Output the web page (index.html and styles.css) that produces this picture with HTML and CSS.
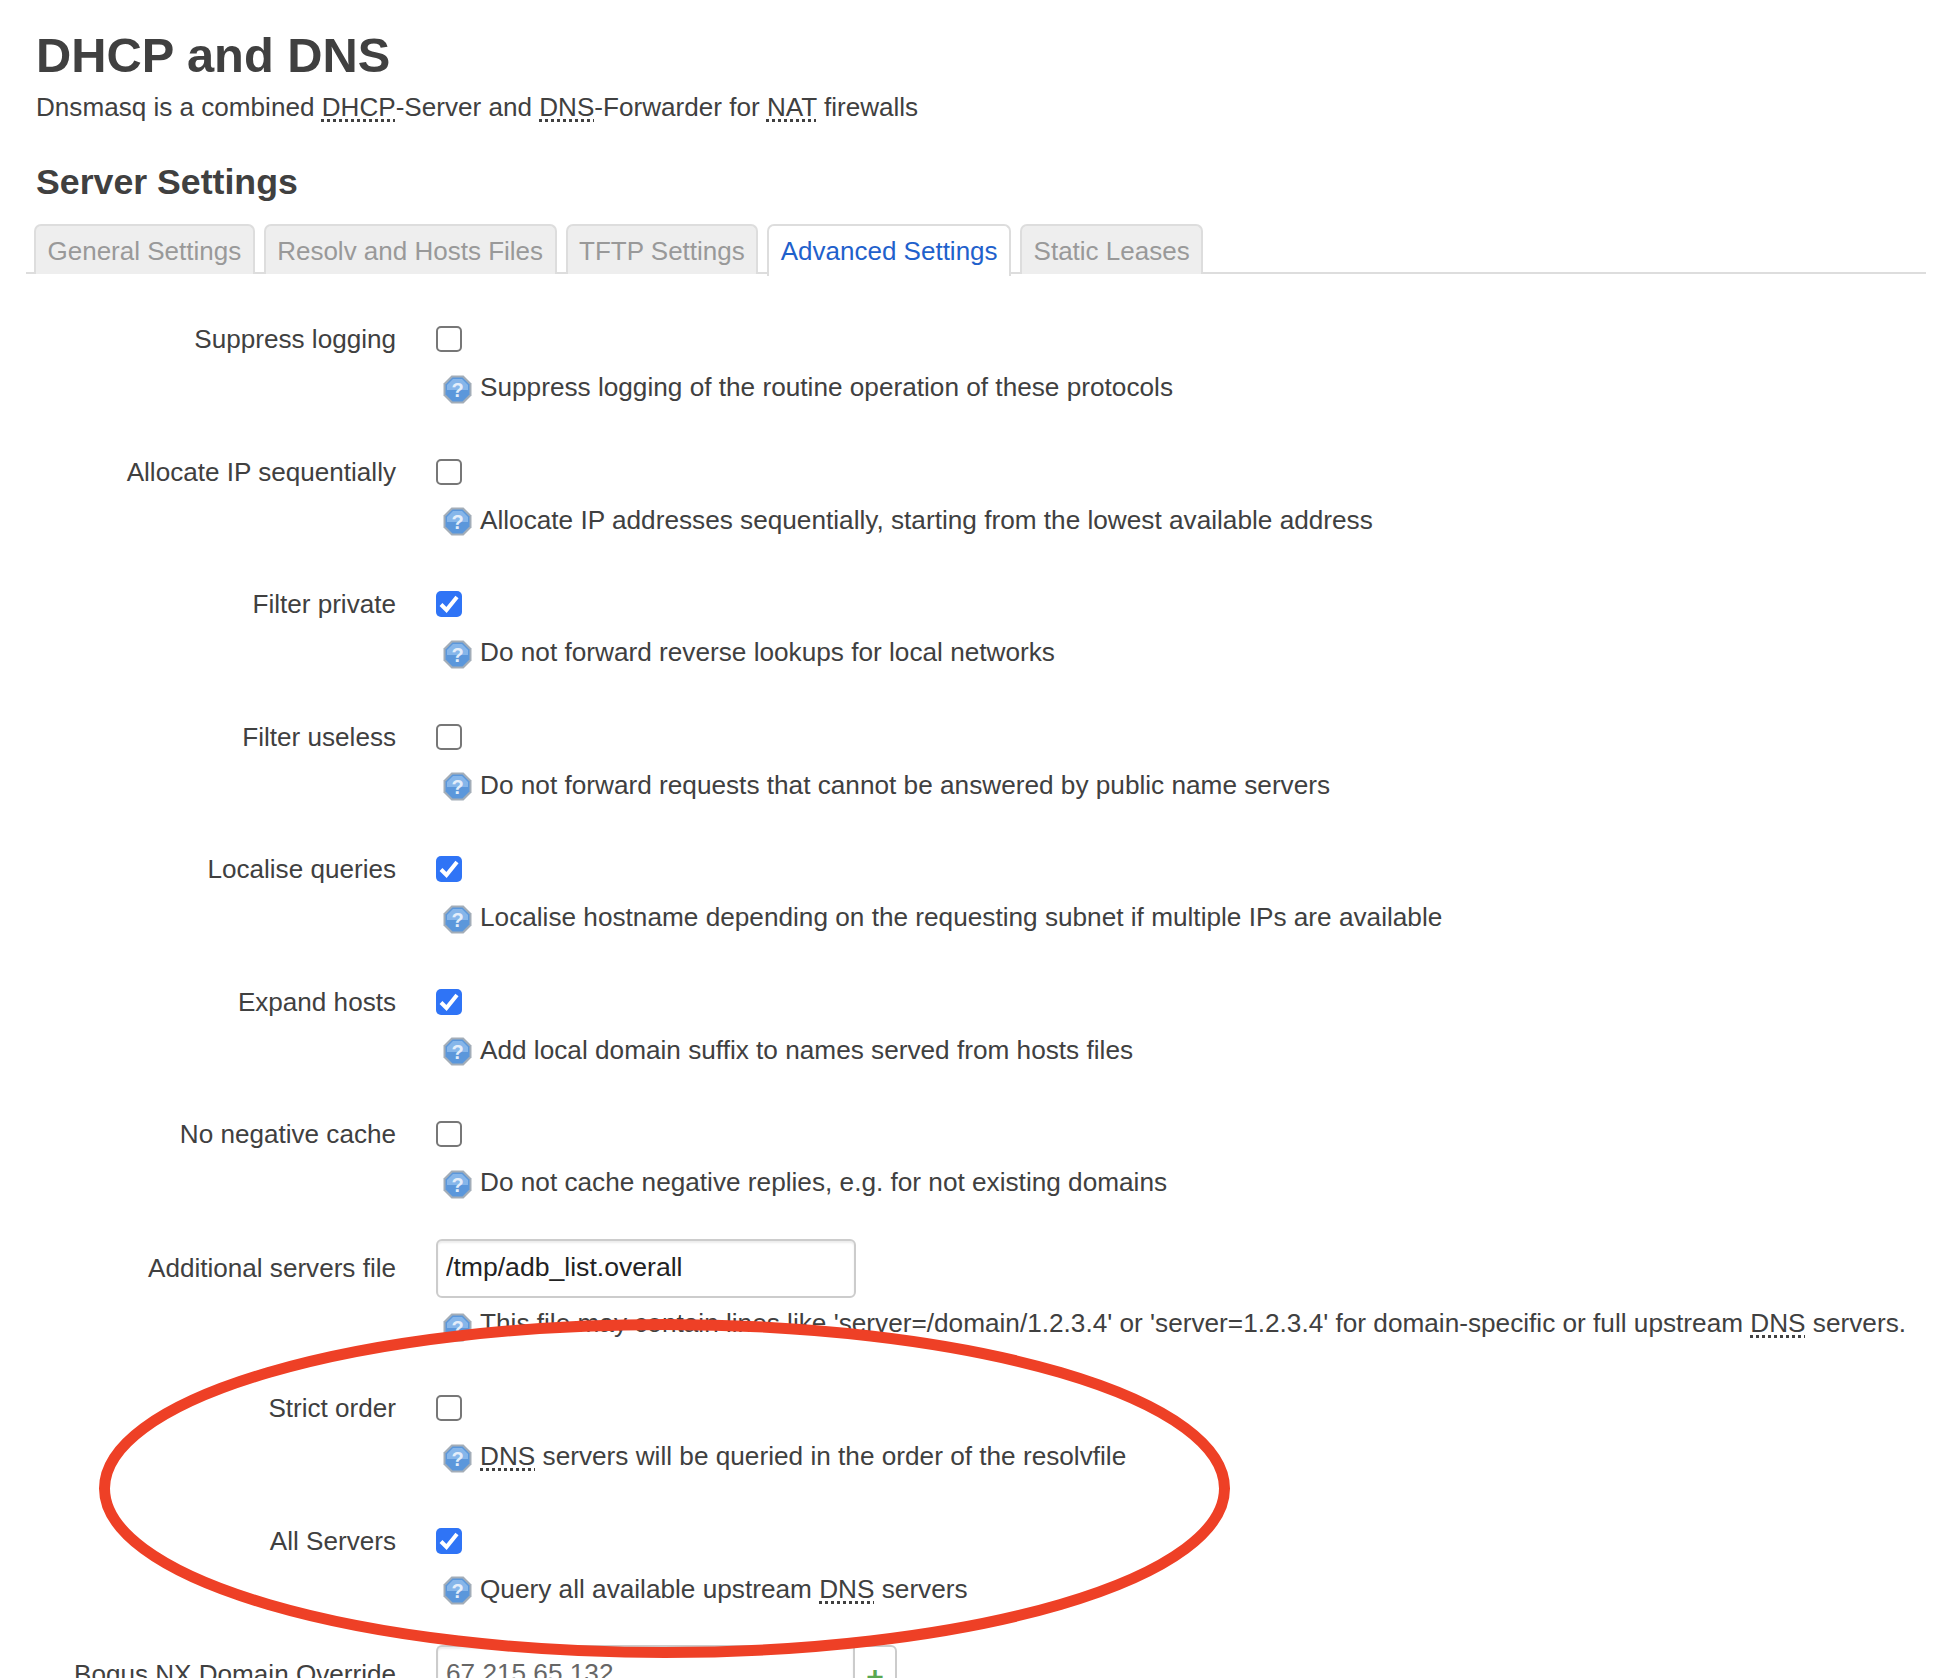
FILE: index.html
```html
<!DOCTYPE html>
<html lang="en">
<head>
  <meta charset="UTF-8" />
  <title>DHCP and DNS</title>
  <link rel="stylesheet" href="styles.css">
</head>
<body>

<svg class="sprite" width="0" height="0">
  <symbol id="help" viewBox="0 0 29 29">
    <polygon points="8.5,0.5 20.5,0.5 28.5,8.5 28.5,20.5 20.5,28.5 8.5,28.5 0.5,20.5 0.5,8.5" fill="#a3adb8"/>
    <polygon points="9.5,2.5 19.5,2.5 26.5,9.5 26.5,19.5 19.5,26.5 9.5,26.5 2.5,19.5 2.5,9.5" fill="#5b97db"/>
    <polygon points="10,4 19,4 25,10 25,15 4,15 4,10" fill="#86b6ea"/>
    <text x="14.5" y="21.5" text-anchor="middle" class="help-mark">?</text>
  </symbol>
</svg>

<h1>DHCP and DNS</h1>
<p class="intro">Dnsmasq is a combined <abbr>DHCP</abbr>-Server and <abbr>DNS</abbr>-Forwarder for <abbr>NAT</abbr> firewalls</p>

<h2>Server Settings</h2>

<ul class="tabs">
  <li>General Settings</li>
  <li>Resolv and Hosts Files</li>
  <li>TFTP Settings</li>
  <li class="active">Advanced Settings</li>
  <li>Static Leases</li>
</ul>

<!-- Options -->
<div class="row">
  <label>Suppress logging</label>
  <div class="field"><input type="checkbox"></div>
  <div class="help"><svg><use href="#help"/></svg><span>Suppress logging of the routine operation of these protocols</span></div>
</div>

<div class="row">
  <label>Allocate IP sequentially</label>
  <div class="field"><input type="checkbox"></div>
  <div class="help"><svg><use href="#help"/></svg><span>Allocate IP addresses sequentially, starting from the lowest available address</span></div>
</div>

<div class="row">
  <label>Filter private</label>
  <div class="field"><input type="checkbox" checked></div>
  <div class="help"><svg><use href="#help"/></svg><span>Do not forward reverse lookups for local networks</span></div>
</div>

<div class="row">
  <label>Filter useless</label>
  <div class="field"><input type="checkbox"></div>
  <div class="help"><svg><use href="#help"/></svg><span>Do not forward requests that cannot be answered by public name servers</span></div>
</div>

<div class="row">
  <label>Localise queries</label>
  <div class="field"><input type="checkbox" checked></div>
  <div class="help"><svg><use href="#help"/></svg><span>Localise hostname depending on the requesting subnet if multiple IPs are available</span></div>
</div>

<div class="row">
  <label>Expand hosts</label>
  <div class="field"><input type="checkbox" checked></div>
  <div class="help"><svg><use href="#help"/></svg><span>Add local domain suffix to names served from hosts files</span></div>
</div>

<div class="row">
  <label>No negative cache</label>
  <div class="field"><input type="checkbox"></div>
  <div class="help"><svg><use href="#help"/></svg><span>Do not cache negative replies, e.g. for not existing domains</span></div>
</div>

<div class="row row-text">
  <label>Additional servers file</label>
  <div class="field"><input type="text" class="text-input" value="/tmp/adb_list.overall"></div>
  <div class="help"><svg><use href="#help"/></svg><span>This file may contain lines like 'server=/domain/1.2.3.4' or 'server=1.2.3.4' for domain-specific or full upstream <abbr>DNS</abbr> servers.</span></div>
</div>

<div class="row">
  <label>Strict order</label>
  <div class="field"><input type="checkbox"></div>
  <div class="help"><svg><use href="#help"/></svg><span><abbr>DNS</abbr> servers will be queried in the order of the resolvfile</span></div>
</div>

<div class="row">
  <label>All Servers</label>
  <div class="field"><input type="checkbox" checked></div>
  <div class="help"><svg><use href="#help"/></svg><span>Query all available upstream <abbr>DNS</abbr> servers</span></div>
</div>

<div class="row row-text">
  <label>Bogus NX Domain Override</label>
  <div class="field add-field">
    <input type="text" class="text-input" placeholder="67.215.65.132">
    <button class="add">+</button>
  </div>
</div>

<!-- Red ring drawn over the screenshot -->
<svg class="ring" viewBox="0 0 1950 1678">
  <ellipse cx="664.5" cy="1488.5" rx="560" ry="164" />
</svg>

</body>
</html>
```

FILE: styles.css
```css
* {
  margin: 0;
  padding: 0;
  box-sizing: border-box;
}

html, body {
  height: 1678px;
  overflow: hidden;
}

body {
  position: relative;
  background: #fff;
  color: #404040;
  font-family: "Liberation Sans", Arial, sans-serif;
  font-size: 26.1px;
  padding-top: 27px;
}

.sprite {
  position: absolute;
}

h1 {
  font-size: 48.8px;
  line-height: 56px;
  margin-left: 36px;
}

.intro {
  line-height: 36px;
  margin: 6px 0 0 36px;
}

abbr {
  text-decoration: underline dotted 3px;
  text-underline-offset: 3px;
  text-decoration-skip-ink: none;
}

h2 {
  font-size: 35.7px;
  line-height: 42px;
  margin: 36px 0 0 36px;
}

/* Tabs */
.tabs {
  display: flex;
  gap: 9px;
  list-style: none;
  margin: 21px 24px 37px 26px;
  padding-left: 8px;
  border-bottom: 2px solid #ddd;
  height: 50px;
  font-size: 26px;
}

.tabs li {
  height: 50px;
  padding: 0 11.5px;
  line-height: 50px;
  color: #999;
  background: #eee;
  border: 2px solid #ddd;
  border-bottom: 0;
  border-radius: 7px 7px 0 0;
  white-space: nowrap;
}

.tabs li.active {
  color: #1f61cc;
  background: #fff;
  height: 52px;
}

/* Rows */
.row {
  display: grid;
  grid-template-columns: 396px 1fr;
  column-gap: 40px;
  margin-bottom: 32.5px;
}

.row label {
  text-align: right;
  line-height: 56px;
  white-space: nowrap;
}

.field {
  display: flex;
  align-items: center;
  height: 56px;
}

.help {
  grid-column: 2;
  display: flex;
  align-items: center;
  gap: 8px;
  height: 44px;
  padding-left: 7px;
  font-size: 26.2px;
  white-space: nowrap;
}

.help span {
  margin-bottom: 3px;
}

.help svg {
  width: 29px;
  height: 29px;
  flex: none;
}

.help-mark {
  font-family: "Liberation Sans", Arial, sans-serif;
  font-size: 20px;
  font-weight: bold;
  fill: #e4eefa;
}

input[type="checkbox"] {
  appearance: none;
  display: block;
  width: 26px;
  height: 26px;
  background: #fff;
  border: 2px solid #777;
  border-radius: 5px;
}

input[type="checkbox"]:checked {
  border: 0;
  background: #2f74f6 url("data:image/svg+xml,%3Csvg xmlns='http://www.w3.org/2000/svg' viewBox='0 0 26 26'%3E%3Cpath d='M5 13.5l5.5 5.5 10.5-13' fill='none' stroke='%23fff' stroke-width='4'/%3E%3C/svg%3E") center no-repeat;
}

.text-input {
  width: 420px;
  height: 59px;
  padding: 0 8px 2px;
  font-family: inherit;
  font-size: 26.6px;
  color: #222;
  background: #fff;
  border: 2px solid #ccc;
  border-radius: 6px;
  box-shadow: inset 0 2px 2px rgba(0, 0, 0, 0.08);
}

.text-input::placeholder {
  color: #666;
  font-size: 26.2px;
  opacity: 1;
}

.row-text {
  margin-bottom: 30.5px;
}

.row-text .field {
  height: 59px;
}

.row-text label {
  line-height: 59px;
}

.row-text .help {
  margin-top: 8px;
}

.row-text .help span {
  margin-bottom: 8px;
}

.add-field {
  align-items: flex-start;
}

.add-field .text-input {
  width: 417px;
  border-radius: 6px 0 0 6px;
  border-right: 0;
}

.add {
  width: 44px;
  height: 59px;
  font-family: inherit;
  font-size: 30px;
  font-weight: bold;
  line-height: 59px;
  color: #5aa850;
  background: #fff;
  border: 2px solid #ccc;
  border-radius: 0 6px 6px 0;
}

.ring {
  position: absolute;
  left: 0;
  top: 0;
  width: 1950px;
  height: 1678px;
}

.ring ellipse {
  fill: none;
  stroke: #ee4026;
  stroke-width: 11;
}
```
